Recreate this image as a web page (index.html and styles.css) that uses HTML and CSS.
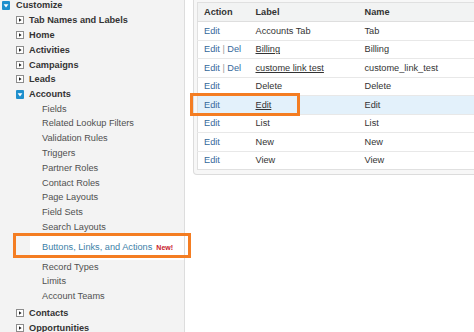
FILE: index.html
```html
<!DOCTYPE html>
<html lang="en">
<head>
  <meta charset="UTF-8" />
  <title>Buttons, Links, and Actions</title>
  <link rel="stylesheet" href="styles.css">
</head>
<body>
  <div class="page">
    <nav class="sidebar">
      <ul class="tree">
        <li>
          <div class="row">
            <svg class="toggle" width="8" height="9" viewBox="0 0 8 9"><rect width="8" height="9" rx="1" fill="#1e8fcd"/><path d="M1.6 3.2 L6.4 3.2 L4 6.4 Z" fill="#fff"/></svg>
            <span class="node-label">Customize</span>
          </div>
          <ul class="branch">
            <li><div class="row"><svg class="toggle" width="8" height="8" viewBox="0 0 8 8"><rect x=".5" y=".5" width="7" height="7" fill="#fff" stroke="#8c8c8c"/><path d="M3 2.2 L5.6 4 L3 5.8 Z" fill="#222"/></svg><span class="node-label">Tab Names and Labels</span></div></li>
            <li><div class="row"><svg class="toggle" width="8" height="8" viewBox="0 0 8 8"><rect x=".5" y=".5" width="7" height="7" fill="#fff" stroke="#8c8c8c"/><path d="M3 2.2 L5.6 4 L3 5.8 Z" fill="#222"/></svg><span class="node-label">Home</span></div></li>
            <li><div class="row"><svg class="toggle" width="8" height="8" viewBox="0 0 8 8"><rect x=".5" y=".5" width="7" height="7" fill="#fff" stroke="#8c8c8c"/><path d="M3 2.2 L5.6 4 L3 5.8 Z" fill="#222"/></svg><span class="node-label">Activities</span></div></li>
            <li><div class="row"><svg class="toggle" width="8" height="8" viewBox="0 0 8 8"><rect x=".5" y=".5" width="7" height="7" fill="#fff" stroke="#8c8c8c"/><path d="M3 2.2 L5.6 4 L3 5.8 Z" fill="#222"/></svg><span class="node-label">Campaigns</span></div></li>
            <li><div class="row"><svg class="toggle" width="8" height="8" viewBox="0 0 8 8"><rect x=".5" y=".5" width="7" height="7" fill="#fff" stroke="#8c8c8c"/><path d="M3 2.2 L5.6 4 L3 5.8 Z" fill="#222"/></svg><span class="node-label">Leads</span></div></li>
            <li>
              <div class="row"><svg class="toggle" width="8" height="9" viewBox="0 0 8 9"><rect width="8" height="9" rx="1" fill="#1e8fcd"/><path d="M1.6 3.2 L6.4 3.2 L4 6.4 Z" fill="#fff"/></svg><span class="node-label">Accounts</span></div>
              <ul class="leaves">
                <li class="leaf">Fields</li>
                <li class="leaf">Related Lookup Filters</li>
                <li class="leaf">Validation Rules</li>
                <li class="leaf">Triggers</li>
                <li class="leaf">Partner Roles</li>
                <li class="leaf">Contact Roles</li>
                <li class="leaf">Page Layouts</li>
                <li class="leaf">Field Sets</li>
                <li class="leaf">Search Layouts</li>
                <li class="leaf current"><span class="current-link">Buttons, Links, and Actions</span><span class="new">New!</span></li>
                <li class="leaf">Record Types</li>
                <li class="leaf">Limits</li>
                <li class="leaf">Account Teams</li>
              </ul>
            </li>
            <li><div class="row"><svg class="toggle" width="8" height="8" viewBox="0 0 8 8"><rect x=".5" y=".5" width="7" height="7" fill="#fff" stroke="#8c8c8c"/><path d="M3 2.2 L5.6 4 L3 5.8 Z" fill="#222"/></svg><span class="node-label">Contacts</span></div></li>
            <li><div class="row"><svg class="toggle" width="8" height="8" viewBox="0 0 8 8"><rect x=".5" y=".5" width="7" height="7" fill="#fff" stroke="#8c8c8c"/><path d="M3 2.2 L5.6 4 L3 5.8 Z" fill="#222"/></svg><span class="node-label">Opportunities</span></div></li>
          </ul>
        </li>
      </ul>
    </nav>

    <main class="content">
      <div class="panel">
        <table class="list">
          <colgroup>
            <col class="col-action">
            <col class="col-label">
            <col>
          </colgroup>
          <thead>
            <tr><th>Action</th><th>Label</th><th>Name</th></tr>
          </thead>
          <tbody>
            <tr><td><a class="act">Edit</a></td><td>Accounts Tab</td><td>Tab</td></tr>
            <tr><td><a class="act">Edit</a> <span class="sep">|</span> <a class="act">Del</a></td><td><a class="label-link">Billing</a></td><td>Billing</td></tr>
            <tr><td><a class="act">Edit</a> <span class="sep">|</span> <a class="act">Del</a></td><td><a class="label-link">custome link test</a></td><td>custome_link_test</td></tr>
            <tr><td><a class="act">Edit</a></td><td>Delete</td><td>Delete</td></tr>
            <tr class="hilite"><td><a class="act">Edit</a></td><td><a class="label-link">Edit</a></td><td>Edit</td></tr>
            <tr><td><a class="act">Edit</a></td><td>List</td><td>List</td></tr>
            <tr><td><a class="act">Edit</a></td><td>New</td><td>New</td></tr>
            <tr><td><a class="act">Edit</a></td><td>View</td><td>View</td></tr>
          </tbody>
        </table>
        <div class="callout"></div>
      </div>
    </main>
  </div>
</body>
</html>
```

FILE: styles.css
```css
* { box-sizing: border-box; }
body {
  margin: 0;
  font-family: 'Liberation Sans', Arial, sans-serif;
  font-size: 9.2px;
  color: #333;
  background: #fff;
  overflow: hidden;
}
.page {
  display: flex;
  height: 332px;
}

/* sidebar tree */
.sidebar {
  width: 185px;
  flex: none;
  background: #f3f3f3;
  border-right: 1px solid #dddddd;
}
.tree, .branch, .leaves {
  list-style: none;
  margin: 0;
  padding: 0;
}
.tree { margin-top: -2px; }
.leaves { padding-bottom: 1.5px; }
.row {
  display: flex;
  align-items: center;
  height: 14.8px;
  white-space: nowrap;
}
.tree > li > .row {
  padding-left: 2px;
  gap: 6px;
}
.branch > li > .row {
  padding-left: 16px;
  gap: 5px;
}
.toggle { flex: none; }
.node-label {
  font-weight: bold;
  color: #333;
}
.leaf {
  padding-left: 42px;
  height: 14.8px;
  line-height: 14.8px;
  color: #505050;
  white-space: nowrap;
}
.leaf.current {
  position: relative;
  height: 24.8px;
  padding: 5px 0 5px 12px;
  margin-left: 30px;
  background: #fff;
}
.leaf.current::after {
  content: '';
  position: absolute;
  left: -17px;
  right: -7px;
  top: -2px;
  bottom: 2px;
  border: 3px solid #f47d22;
}
.current-link { color: #3d7fa8; }
.new {
  margin-left: 4px;
  font-size: 7px;
  font-weight: bold;
  color: #c8202a;
}

/* related list */
.content {
  flex: 1;
  min-width: 0;
  padding-left: 8px;
}
.panel {
  position: relative;
  width: 300px;
  background: #f7f7f7;
  border: 1px solid #dcdcdc;
  border-top: 0;
  border-radius: 0 0 4px 4px;
  padding: 2px 3px 4px;
}
.list {
  width: 100%;
  border-collapse: collapse;
  background: #fff;
  border: 1px solid #e0e0e0;
}
.col-action { width: 52px; }
.col-label { width: 109px; }
.list th {
  height: 19px;
  padding: 0 6px;
  text-align: left;
  font-weight: bold;
  color: #333;
  background: #f2f3f3;
  border-bottom: 1px solid #dedede;
}
.list td {
  height: 18.5px;
  padding: 0 6px;
  color: #333;
  white-space: nowrap;
  border-bottom: 1px solid #e8e8e8;
}
.list tr:last-child td { border-bottom: 0; }
.list .hilite td { background: #e3f1fb; }
.act { color: #35699b; }
.sep { color: #999; }
.label-link {
  color: #333;
  text-decoration: underline;
}
.callout {
  position: absolute;
  left: -4px;
  top: 93px;
  width: 110px;
  height: 23px;
  border: 3px solid #f47d22;
}
```
